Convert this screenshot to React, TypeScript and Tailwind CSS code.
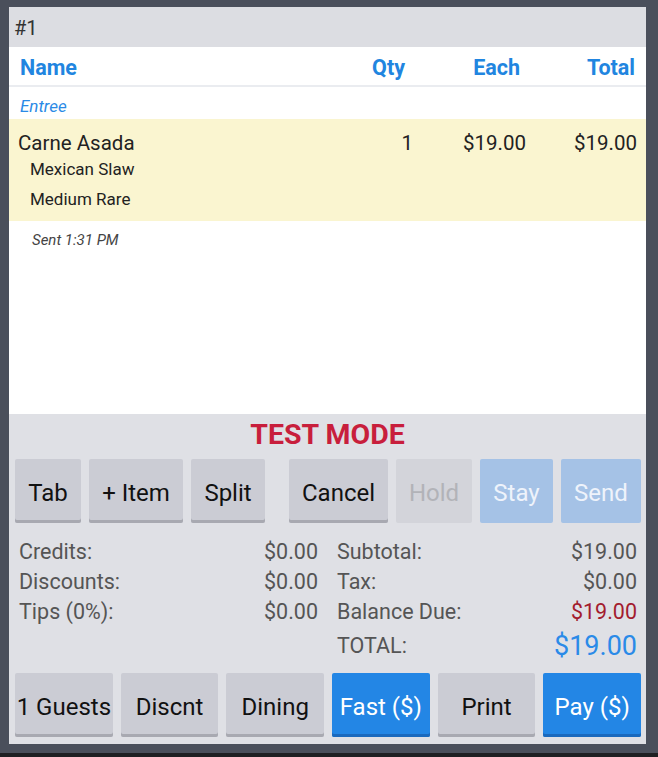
import React from "react";

const font = { fontFamily: "Roboto, 'Noto Sans', Arial, sans-serif" };

function GrayBtn({ w, label, cls = "" }: { w: string; label: string; cls?: string }) {
  return (
    <div
      className={`${w} ${cls} h-[64px] pt-[4px] rounded-[2px] bg-[#cbccd4] shadow-[inset_0_-3px_0_#a8a9b1] flex items-center justify-center text-[24px] text-[#111]`}
    >
      {label}
    </div>
  );
}

export default function App() {
  return (
    <div className="w-[658px] h-[757px] bg-[#4a4f5b] flex flex-col" style={font}>
      <div className="pt-[7px] pl-[9px]">
        <div className="w-[637px] h-[737px] flex flex-col bg-white overflow-hidden">
          {/* Title bar */}
          <div className="h-[40px] bg-[#dcdde2] flex items-center pt-[2px] pl-[5px] text-[20px] text-[#333]">#1</div>

          {/* Column header */}
          <div className="h-[40px] grid grid-cols-[1fr_110px_115px_110px] pr-[7px] items-center pt-[5px] border-b-2 border-[#eaecf0] text-[21.5px] font-bold text-[#2185e0]">
            <div className="pl-[11px]">Name</div>
            <div className="text-right pr-[9px]">Qty</div>
            <div className="text-right pr-[9px]">Each</div>
            <div className="text-right pr-[4px]">Total</div>
          </div>

          {/* Category */}
          <div className="h-[32px] pt-[9px] pl-[11px] text-[17px] leading-[20px] italic text-[#2a8ae6]">Entree</div>

          {/* Item */}
          <div className="h-[102px] bg-[#faf5d0] pt-[13px] text-[#222]">
            <div className="grid grid-cols-[1fr_110px_115px_110px] pr-[7px] text-[20.5px] leading-[22px]">
              <div className="pl-[9px]">Carne Asada</div>
              <div className="text-right pr-[1px]">1</div>
              <div className="text-right pr-[3px]">$19.00</div>
              <div className="text-right pr-[2px]">$19.00</div>
            </div>
            <div className="pl-[21px] text-[17px] leading-[30px]">Mexican Slaw</div>
            <div className="pl-[21px] text-[17px] leading-[30px]">Medium Rare</div>
          </div>

          <div className="mt-[9px] pl-[23px] text-[15px] leading-[20px] italic text-[#444]">Sent 1:31 PM</div>

          <div className="flex-1" />

          {/* Bottom gray area */}
          <div className="h-[330px] bg-[#dfe0e5] flex flex-col pt-[4px] pb-[7px]">
            <div className="h-[32px] leading-[32px] pt-[1px] text-center text-[28.5px] font-bold text-[#c81e3c]">TEST MODE</div>

            <div className="mt-[9px] flex pl-[6px]">
              <GrayBtn w="w-[66px]" label="Tab" />
              <GrayBtn w="w-[94px]" label="+ Item" cls="ml-[8px]" />
              <GrayBtn w="w-[74px]" label="Split" cls="ml-[8px]" />
              <GrayBtn w="w-[99px]" label="Cancel" cls="ml-[24px]" />
              <div className="ml-[8px] w-[76px] h-[64px] pt-[4px] rounded-[2px] bg-[#d3d4da] flex items-center justify-center text-[24px] text-[#b2b3b8]">
                Hold
              </div>
              <div className="ml-[8px] w-[73px] h-[64px] pt-[4px] rounded-[2px] bg-[#a5c2e6] flex items-center justify-center text-[24px] text-[#eef3fb]">
                Stay
              </div>
              <div className="ml-[8px] w-[80px] h-[64px] pt-[4px] rounded-[2px] bg-[#a5c2e6] flex items-center justify-center text-[24px] text-[#eef3fb]">
                Send
              </div>
            </div>

            {/* Totals */}
            <div className="mt-[14px] grid grid-cols-[299px_300px] gap-x-[19px] pl-[10px] text-[21.5px] text-[#555]">
              <div className="flex flex-col">
                <div className="h-[30px] flex items-center justify-between">
                  <span>Credits:</span>
                  <span>$0.00</span>
                </div>
                <div className="h-[30px] flex items-center justify-between">
                  <span>Discounts:</span>
                  <span>$0.00</span>
                </div>
                <div className="h-[30px] flex items-center justify-between">
                  <span>Tips (0%):</span>
                  <span>$0.00</span>
                </div>
              </div>
              <div className="flex flex-col">
                <div className="h-[30px] flex items-center justify-between">
                  <span>Subtotal:</span>
                  <span>$19.00</span>
                </div>
                <div className="h-[30px] flex items-center justify-between">
                  <span>Tax:</span>
                  <span>$0.00</span>
                </div>
                <div className="h-[30px] flex items-center justify-between">
                  <span>Balance Due:</span>
                  <span className="text-[#a31c2e]">$19.00</span>
                </div>
                <div className="h-[38px] flex items-center justify-between">
                  <span>TOTAL:</span>
                  <span className="text-[27px] text-[#2a8ae8]">$19.00</span>
                </div>
              </div>
            </div>

            {/* Bottom buttons */}
            <div className="mt-[8px] grid grid-cols-6 gap-x-[8px] pl-[6px] pr-[5px]">
              <GrayBtn w="w-auto" label="1 Guests" />
              <GrayBtn w="w-auto" label="Discnt" />
              <GrayBtn w="w-auto" label="Dining" />
              <div className="h-[64px] pt-[4px] rounded-[2px] bg-[#2386e5] shadow-[inset_0_-3px_0_#1a69bd] flex items-center justify-center text-[24px] text-white">
                Fast ($)
              </div>
              <GrayBtn w="w-auto" label="Print" />
              <div className="h-[64px] pt-[4px] rounded-[2px] bg-[#2386e5] shadow-[inset_0_-3px_0_#1a69bd] flex items-center justify-center text-[24px] text-white">
                Pay ($)
              </div>
            </div>
          </div>
        </div>
      </div>
      <div className="flex-1" />
      <div className="h-[4px] bg-[#1e1f22]" />
    </div>
  );
}
